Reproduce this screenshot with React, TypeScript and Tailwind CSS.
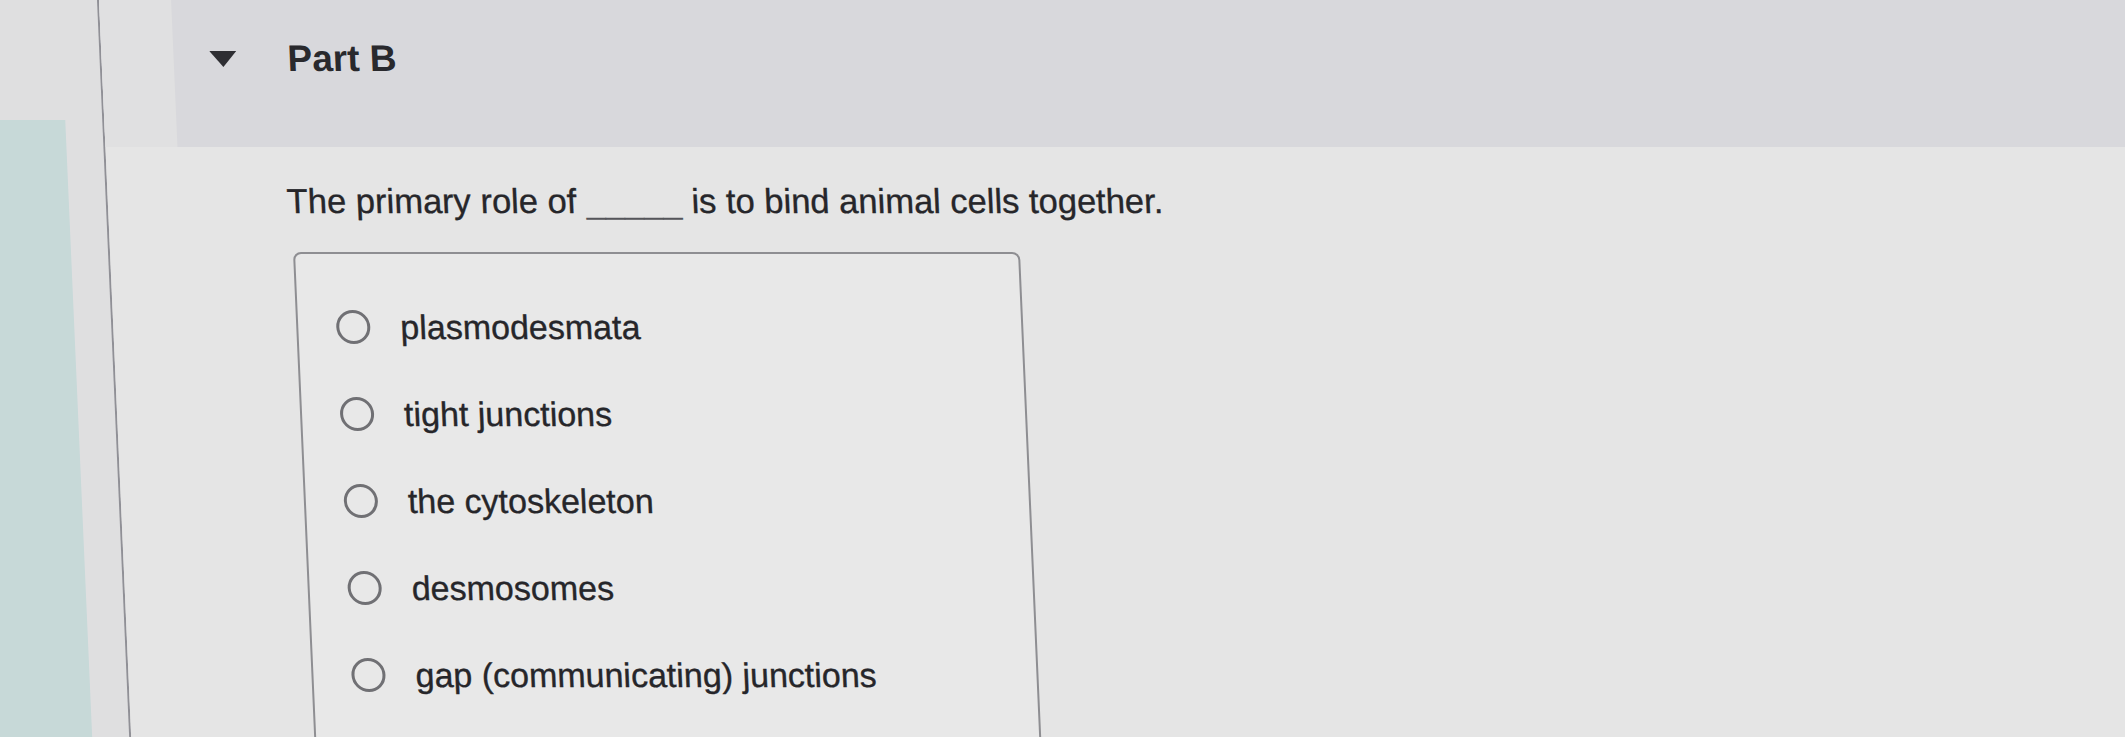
import { useState } from "react";

const options = [
  "plasmodesmata",
  "tight junctions",
  "the cytoskeleton",
  "desmosomes",
  "gap (communicating) junctions",
];

export default function App() {
  const [selected, setSelected] = useState<number | null>(null);
  const [open, setOpen] = useState(true);

  return (
    <div className="h-[737px] w-full overflow-hidden bg-[#dfdfe0] font-['Liberation_Sans',Arial,sans-serif] text-[#26262a]">
      {/* the photo leans a little, so the page is skewed as a whole */}
      <div className="-ml-[40px] flex h-full w-[calc(100%+40px)] origin-top-left skew-x-[2.5deg]">
        {/* Left rail */}
        <div className="flex w-[137px] shrink-0 flex-col bg-[#dfdfe0]">
          <div className="mt-[120px] w-[100px] flex-1 bg-[#c7d9d8]" />
        </div>
        <div className="w-[2px] shrink-0 bg-[#909096]" />

        {/* Main */}
        <div className="flex min-w-0 flex-1 flex-col bg-[#e5e5e5]">
          {/* Part header */}
          <div className="flex bg-[#e0e0e1]">
            <div className="ml-[72px] h-[147px] flex-1 bg-[#d8d8dc] pl-[36px] pt-[40px]">
              <button
                onClick={() => setOpen(!open)}
                className="flex h-[37px] cursor-pointer items-center gap-[51px]"
              >
                <svg width="27" height="16" viewBox="0 0 27 16" className={open ? "" : "-rotate-90"}>
                  <polygon points="0,0 27,0 13.5,16" fill="#2e2e33" />
                </svg>
                <span className="text-[37px] font-bold leading-[37px] text-[#29292d]">Part B</span>
              </button>
            </div>
          </div>

          {open && (
            <>
              {/* Question */}
              <p className="mt-[34px] whitespace-nowrap pl-[179px] text-[34.5px] leading-[40px] [-webkit-text-stroke:0.35px_#26262a]">
                The primary role of <span className="text-[#55555a] [-webkit-text-stroke:0px]">_____</span> is to bind animal cells together.
              </p>

              {/* Answer choices */}
              <div className="ml-[183px] mt-[31px] w-[727px] rounded-lg border-2 border-[#8e8e92] bg-[#e8e8e8] pb-[40px] pl-[38px] pt-[29px]">
                {options.map((opt, i) => (
                  <label key={opt} className="flex h-[87px] cursor-pointer items-center gap-[30px]">
                    <input
                      type="radio"
                      name="partB"
                      className="sr-only"
                      checked={selected === i}
                      onChange={() => setSelected(i)}
                    />
                    <span className="flex h-[34px] w-[34px] shrink-0 items-center justify-center rounded-full border-[3px] border-[#707074]">
                      {selected === i && <span className="h-[14px] w-[14px] rounded-full bg-[#2a6fb0]" />}
                    </span>
                    <span className="whitespace-nowrap text-[34px] leading-[40px] [-webkit-text-stroke:0.35px_#26262a]">
                      {opt}
                    </span>
                  </label>
                ))}
              </div>
            </>
          )}
        </div>
      </div>
    </div>
  );
}
